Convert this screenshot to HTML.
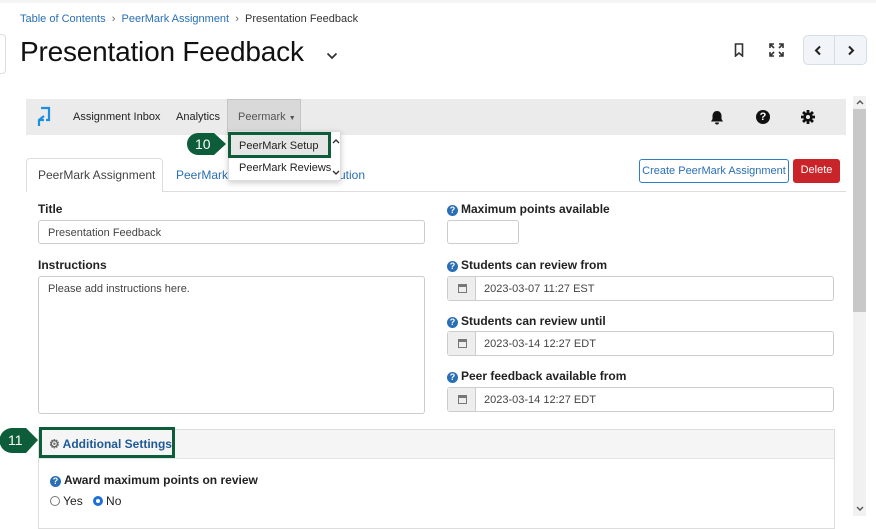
<!DOCTYPE html>
<html><head><meta charset="utf-8"><style>
*{box-sizing:border-box;margin:0;padding:0}
body{width:876px;height:526px;overflow:hidden;background:#fff;font-family:"Liberation Sans",Arial,sans-serif;position:relative;color:#222}
.a{position:absolute}
.lbl{font-size:12px;font-weight:bold;color:#222}
.q{display:inline-block;width:11px;height:11px;border-radius:50%;background:#2a6fb5;color:#fff;font-size:9px;text-align:center;line-height:11px;margin-right:3px;vertical-align:0px}
.inp{border:1px solid #ccc;border-radius:3px;background:#fff;font-size:11px;color:#444}
.date{border:1px solid #ccc;border-radius:3px;background:#fff;height:25px;width:387px}
.date .ic{position:absolute;left:0;top:0;width:28px;height:23px;background:#eee;border-right:1px solid #ccc}
.date .t{position:absolute;left:36px;top:6px;font-size:11px;color:#444}
.cal{position:absolute;left:10px;top:7px;width:9px;height:9px;border:1px solid #777;border-top-width:3px}
</style></head><body>
<div class="a" style="left:0;top:0;width:876px;height:3px;background:#f5f5f5"></div>
<div class="a" style="left:20px;top:13px;font-size:11px;color:#2a6fb5">Table of Contents <span style="color:#666">&nbsp;›&nbsp;</span> PeerMark Assignment <span style="color:#666">&nbsp;›&nbsp;</span> <span style="color:#333">Presentation Feedback</span></div>
<div class="a" style="left:20px;top:36px;font-size:28px;color:#111;letter-spacing:-0.2px">Presentation Feedback</div>
<svg class="a" style="left:326px;top:52px" width="12" height="8"><path d="M1.5 1.5l4.5 4.5 4.5-4.5" fill="none" stroke="#333" stroke-width="1.8"/></svg>
<div class="a" style="left:0;top:34px;width:6px;height:40px;border:1px solid #ddd;border-left:none;border-radius:0 4px 4px 0"></div>
<svg class="a" style="left:734px;top:43px" width="10" height="14"><path d="M1.5 1h7v12l-3.5-3-3.5 3z" fill="none" stroke="#333" stroke-width="1.6"/></svg>
<svg class="a" style="left:769px;top:43px" width="15" height="14"><path d="M1 5V1h4M1 1l4 4M14 5V1h-4M14 1l-4 4M1 9v4h4M1 13l4-4M14 9v4h-4M14 13l-4-4" fill="none" stroke="#333" stroke-width="1.6"/></svg>
<div class="a" style="left:803px;top:35px;width:64px;height:30px;border:1px solid #d6dde6;border-radius:5px;background:#f1f4f8"></div>
<div class="a" style="left:834px;top:36px;width:1px;height:28px;background:#d6dde6"></div>
<svg class="a" style="left:814px;top:45px" width="8" height="11"><path d="M6 1.5L2 5.5l4 4" fill="none" stroke="#222" stroke-width="2"/></svg>
<svg class="a" style="left:847px;top:45px" width="8" height="11"><path d="M2 1.5l4 4-4 4" fill="none" stroke="#222" stroke-width="2"/></svg>
<!-- scrollbar -->
<div class="a" style="left:853px;top:96px;width:13px;height:420px;background:#f1f1f1"></div>
<div class="a" style="left:853px;top:109px;width:13px;height:203px;background:#c8c8c8"></div>
<svg class="a" style="left:856px;top:99px" width="8" height="6"><path d="M1 5l3-3 3 3" fill="none" stroke="#555" stroke-width="1.4"/></svg>
<svg class="a" style="left:856px;top:506px" width="8" height="6"><path d="M1 1l3 3 3-3" fill="none" stroke="#555" stroke-width="1.4"/></svg>
<!-- navbar -->
<div class="a" style="left:26px;top:99px;width:820px;height:36px;background:#ebebeb"></div>
<svg class="a" style="left:36px;top:106px" width="16" height="22"><path d="M5 2h8v12H10M8 10l-5 4v6M3 14l5 0" fill="none" stroke="#1b8fe0" stroke-width="2.2"/></svg>
<div class="a" style="left:73px;top:111px;font-size:11px;color:#222">Assignment Inbox</div>
<div class="a" style="left:176px;top:111px;font-size:11px;color:#222">Analytics</div>
<div class="a" style="left:227px;top:99px;width:74px;height:36px;background:#d9d9d9;border:1px solid #c4c4c4;border-bottom:none"></div>
<div class="a" style="left:238px;top:111px;font-size:11px;color:#555">Peermark <span style="font-size:7px">▼</span></div>
<svg class="a" style="left:710px;top:110px" width="14" height="15"><path d="M7 1c-3 0-4.5 2.5-4.5 5v3L1 11.5h12L11.5 9V6C11.5 3.5 10 1 7 1z M5 12.5a2 2 0 0 0 4 0z" fill="#111"/></svg>
<div class="a" style="left:756px;top:110px;width:14px;height:14px;border-radius:50%;background:#111;color:#fff;font-size:11px;font-weight:bold;text-align:center;line-height:14px">?</div>
<svg class="a" style="left:801px;top:110px" width="14" height="14" viewBox="0 0 14 14"><g fill="#111"><circle cx="7" cy="7" r="4.6"/><rect x="5.6" y="0" width="2.8" height="14"/><rect x="0" y="5.6" width="14" height="2.8"/><rect x="5.6" y="0" width="2.8" height="14" transform="rotate(45 7 7)"/><rect x="5.6" y="0" width="2.8" height="14" transform="rotate(-45 7 7)"/></g><circle cx="7" cy="7" r="2" fill="#ebebeb"/></svg>
<!-- tabs -->
<div class="a" style="left:26px;top:191px;width:820px;height:1px;background:#ddd"></div>
<div class="a" style="left:26px;top:158px;width:137px;height:34px;border:1px solid #ddd;border-bottom:none;border-radius:4px 4px 0 0;background:#fff"></div>
<div class="a" style="left:38px;top:168px;font-size:12px;color:#444">PeerMark Assignment</div>
<div class="a" style="left:176px;top:168px;font-size:12px;color:#2a6fb5">PeerMark</div>
<div class="a" style="left:339px;top:168px;font-size:12px;color:#2a6fb5">ution</div>
<div class="a" style="left:639px;top:159px;width:150px;height:24px;border:1px solid #2a80c5;border-radius:3px;font-size:11px;color:#2a6fb5;text-align:center;line-height:22px">Create PeerMark Assignment</div>
<div class="a" style="left:793px;top:159px;width:47px;height:24px;background:#c9242a;border-radius:3px;font-size:11px;color:#fff;text-align:center;line-height:22px">Delete</div>
<!-- dropdown -->
<div class="a" style="left:228px;top:131px;width:113px;height:50px;background:#fff;border:1px solid #ddd;box-shadow:0 2px 6px rgba(0,0,0,.2)"></div>
<div class="a" style="left:228px;top:132px;width:103px;height:26px;background:#e6e6e6;border:3px solid #0d5c3a"></div>
<div class="a" style="left:239px;top:140px;font-size:11px;color:#222">PeerMark Setup</div>
<div class="a" style="left:239px;top:162px;font-size:11px;color:#222">PeerMark Reviews</div>
<svg class="a" style="left:332px;top:138px" width="8" height="6"><path d="M1 5l3-3 3 3" fill="none" stroke="#333" stroke-width="1.4"/></svg>
<svg class="a" style="left:332px;top:170px" width="8" height="6"><path d="M1 1l3 3 3-3" fill="none" stroke="#333" stroke-width="1.4"/></svg>
<svg class="a" style="left:186px;top:132px" width="44" height="24"><path d="M12 1h16l12 11-12 11H12a11 11 0 0 1 0-22z" fill="#0d5c3a"/><text x="9" y="17" fill="#fff" font-size="14" font-family="Liberation Sans">10</text></svg>
<!-- left form -->
<div class="a lbl" style="left:38px;top:202px">Title</div>
<div class="a inp" style="left:38px;top:220px;width:387px;height:24px;padding:6px 9px">Presentation Feedback</div>
<div class="a lbl" style="left:38px;top:258px">Instructions</div>
<div class="a inp" style="left:38px;top:276px;width:387px;height:138px;padding:6px 9px">Please add instructions here.</div>
<!-- right form -->
<div class="a lbl" style="left:447px;top:202px"><span class="q">?</span>Maximum points available</div>
<div class="a inp" style="left:447px;top:220px;width:72px;height:24px"></div>
<div class="a lbl" style="left:447px;top:258px"><span class="q">?</span>Students can review from</div>
<div class="a date" style="left:447px;top:276px"><div class="ic"><div class="cal"></div></div><div class="t">2023-03-07 11:27 EST</div></div>
<div class="a lbl" style="left:447px;top:314px"><span class="q">?</span>Students can review until</div>
<div class="a date" style="left:447px;top:331px"><div class="ic"><div class="cal"></div></div><div class="t">2023-03-14 12:27 EDT</div></div>
<div class="a lbl" style="left:447px;top:369px"><span class="q">?</span>Peer feedback available from</div>
<div class="a date" style="left:447px;top:387px"><div class="ic"><div class="cal"></div></div><div class="t">2023-03-14 12:27 EDT</div></div>
<!-- additional settings -->
<div class="a" style="left:38px;top:429px;width:797px;height:100px;border:1px solid #ddd;background:#fff"></div>
<div class="a" style="left:39px;top:430px;width:795px;height:29px;background:#f5f5f5;border-bottom:1px solid #e4e4e4"></div>
<div class="a" style="left:39px;top:427px;width:136px;height:31px;border:3px solid #0d5c3a"></div>
<div class="a" style="left:49px;top:437px;font-size:12px;font-weight:bold;color:#1f5a96"><span style="color:#666">⚙</span> Additional Settings</div>
<svg class="a" style="left:0px;top:427px" width="42" height="28"><path d="M12 1h14l12 12-12 13H12a12.5 12.5 0 0 1 0-25z" fill="#0d5c3a"/><text x="8" y="18" fill="#fff" font-size="14" font-family="Liberation Sans">11</text></svg>
<div class="a lbl" style="left:50px;top:473px"><span class="q">?</span>Award maximum points on review</div>
<div class="a" style="left:50px;top:494px;font-size:12px;color:#222"><span style="display:inline-block;width:10px;height:10px;border:1px solid #777;border-radius:50%;vertical-align:-1px"></span> Yes &nbsp;&nbsp;<span style="display:inline-block;width:10px;height:10px;border:3px solid #1e6fd9;border-radius:50%;vertical-align:-1px"></span> No</div>
</body></html>
